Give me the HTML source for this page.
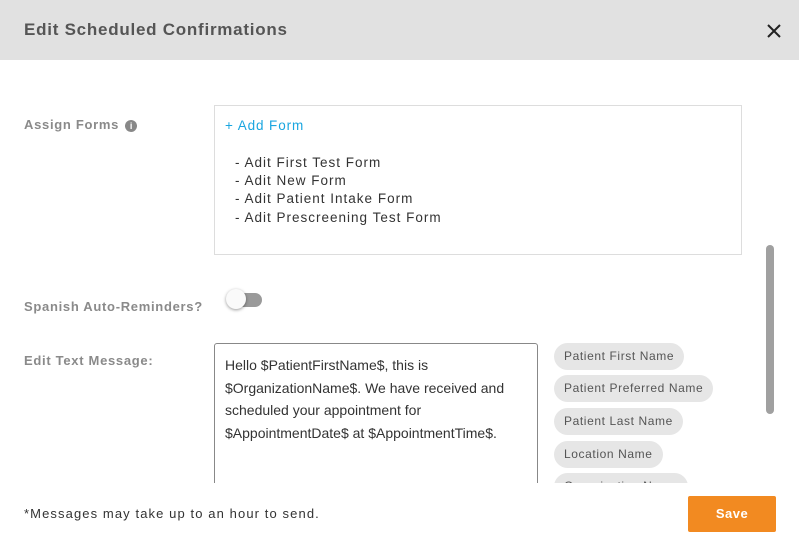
<!DOCTYPE html>
<html><head><style>
*{margin:0;padding:0;box-sizing:border-box}
body{width:799px;height:553px;background:#fff;font-family:"Liberation Sans",sans-serif;position:relative;overflow:hidden}
.hdr{position:absolute;left:0;top:0;width:799px;height:60px;background:#e1e1e1}
.hdr h1{position:absolute;left:24px;top:20px;font-size:17px;font-weight:bold;color:#555;letter-spacing:0.75px}
.x{position:absolute;left:766px;top:23px}
.lbl{position:absolute;left:24px;font-size:13px;font-weight:bold;color:#8a8a8a;letter-spacing:0.7px}
.clip{position:absolute;left:0;top:60px;width:799px;height:423px;overflow:hidden}
.box{position:absolute;left:214px;top:45px;width:528px;height:150px;border:1px solid #ddd}
.add{position:absolute;left:10px;top:12px;color:#1aa6e0;font-size:13.5px;letter-spacing:0.9px}
.list{position:absolute;left:20px;top:48px;font-size:13.5px;color:#333;line-height:18.2px;letter-spacing:1px}
.ta{position:absolute;left:214px;top:283px;width:324px;height:200px;border:1px solid #888;border-radius:3px;padding:10px 10px;font-size:14px;line-height:22.5px;color:#333}
.chip{position:absolute;left:554px;height:27px;border-radius:14px;background:#e6e6e6;color:#555;font-size:12px;line-height:27px;padding:0 10px;letter-spacing:0.6px}
.tog{position:absolute;left:228px;top:233px;width:34px;height:14px;border-radius:7px;background:#9a9a9a}
.knob{position:absolute;left:226px;top:229px;width:20px;height:20px;border-radius:50%;background:#fafafa;box-shadow:0 1px 3px rgba(0,0,0,.4)}
.sb{position:absolute;left:766px;top:245px;width:8px;height:169px;border-radius:4px;background:#a0a0a0}
.foot{position:absolute;left:24px;top:506px;font-size:13px;color:#333;letter-spacing:1.1px}
.save{position:absolute;left:688px;top:496px;width:88px;height:36px;background:#f28a21;border-radius:2px;color:#fff;font-size:13px;font-weight:bold;text-align:center;line-height:36px;letter-spacing:0.5px}
.info{display:inline-block;width:12px;height:12px;border-radius:50%;background:#888;color:#fff;font-size:9px;text-align:center;line-height:12px;margin-left:6px;vertical-align:0px;letter-spacing:0}
</style></head><body>
<div class="hdr"><h1>Edit Scheduled Confirmations</h1>
<svg class="x" width="16" height="16" viewBox="0 0 16 16"><path d="M2 2L14 14M14 2L2 14" stroke="#222" stroke-width="2"/></svg></div>
<div class="clip">
<div class="lbl" style="top:57px">Assign Forms<span class="info">i</span></div>
<div class="box"><div class="add">+ Add Form</div>
<div class="list">- Adit First Test Form<br>- Adit New Form<br>- Adit Patient Intake Form<br>- Adit Prescreening Test Form</div></div>
<div class="lbl" style="top:239px">Spanish Auto-Reminders?</div>
<div class="tog"></div><div class="knob"></div>
<div class="lbl" style="top:293px">Edit Text Message:</div>
<div class="ta">Hello $PatientFirstName$, this is $OrganizationName$. We have received and scheduled your appointment for $AppointmentDate$ at $AppointmentTime$.</div>
<div class="chip" style="top:283px">Patient First Name</div>
<div class="chip" style="top:315px">Patient Preferred Name</div>
<div class="chip" style="top:348px">Patient Last Name</div>
<div class="chip" style="top:381px">Location Name</div>
<div class="chip" style="top:413px">Organization Name</div>
</div>
<div class="sb"></div>
<div class="foot">*Messages may take up to an hour to send.</div>
<div class="save">Save</div>
</body></html>
